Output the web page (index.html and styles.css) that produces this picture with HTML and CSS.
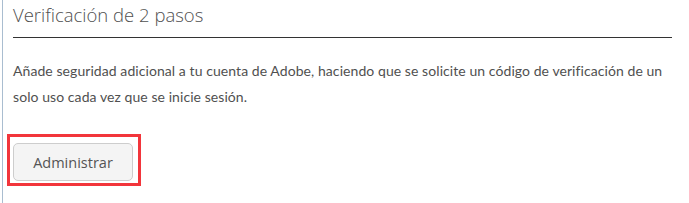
FILE: index.html
```html
<!DOCTYPE html>
<html lang="es">
<head>
    <meta charset="UTF-8">
    <meta name="viewport" content="width=device-width, initial-scale=1.0">
    <title>Verificación de 2 pasos</title>
    <link rel="stylesheet" href="styles.css">
</head>
<body>
    <div class="section">
        <h2 class="title">Verificación de 2 pasos</h2>
        <p class="desc">Añade seguridad adicional a tu cuenta de Adobe, haciendo que se solicite un código de verificación de un solo uso cada vez que se inicie sesión.</p>
        <div class="actions">
            <button class="btn">Administrar</button>
            <span class="highlight"></span>
        </div>
    </div>
</body>
</html>
```

FILE: styles.css
```css
html, body {
    height: 100%;
}
body {
    margin: 0;
    padding: 0 0 0 2px;
    background: #fff;
    font-family: Lato, 'Open Sans', sans-serif;
    color: #4b4b4b;
}
.section {
    border-left: 1px solid #a9bdd0;
    height: 100%;
    padding: 0 17px 0 10px;
    box-sizing: border-box;
}
.title {
    margin: 0;
    padding-top: 3px;
    height: 34px;
    font-family: 'Open Sans', sans-serif;
    font-weight: 300;
    font-size: 18.5px;
    line-height: 24px;
    color: #505050;
    border-bottom: 1px solid #333;
}
.desc {
    margin: 0;
    padding-top: 20px;
    font-size: 14px;
    letter-spacing: 0.07px;
    line-height: 26px;
    color: #505050;
}
.actions {
    position: relative;
    padding-top: 33px;
}
.btn {
    width: 120px;
    height: 38px;
    background: #f4f4f4;
    border: 1px solid #cdcdcd;
    border-radius: 5px;
    font-family: 'Open Sans', sans-serif;
    font-size: 14.5px;
    color: #555;
    cursor: pointer;
}
.highlight {
    position: absolute;
    left: -6px;
    top: 24px;
    width: 128px;
    height: 46px;
    border: 3px solid #f2353b;
}
```
